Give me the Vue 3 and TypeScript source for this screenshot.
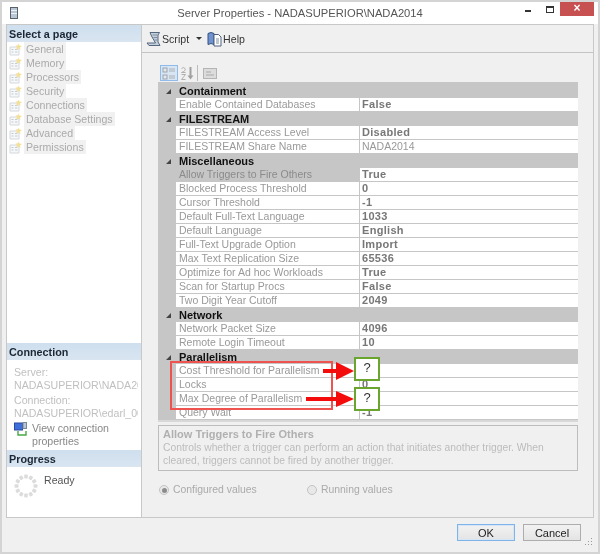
<script setup lang="ts">
type Row = { name: string; value?: string; cat?: boolean; plain?: boolean; sel?: boolean };
const pages: string[] = ['General', 'Memory', 'Processors', 'Security', 'Connections', 'Database Settings', 'Advanced', 'Permissions'];
const rows: Row[] = [
  { name: 'Containment', cat: true },
  { name: 'Enable Contained Databases', value: 'False' },
  { name: 'FILESTREAM', cat: true },
  { name: 'FILESTREAM Access Level', value: 'Disabled' },
  { name: 'FILESTREAM Share Name', value: 'NADA2014', plain: true },
  { name: 'Miscellaneous', cat: true },
  { name: 'Allow Triggers to Fire Others', value: 'True', sel: true },
  { name: 'Blocked Process Threshold', value: '0' },
  { name: 'Cursor Threshold', value: '-1' },
  { name: 'Default Full-Text Language', value: '1033' },
  { name: 'Default Language', value: 'English' },
  { name: 'Full-Text Upgrade Option', value: 'Import' },
  { name: 'Max Text Replication Size', value: '65536' },
  { name: 'Optimize for Ad hoc Workloads', value: 'True' },
  { name: 'Scan for Startup Procs', value: 'False' },
  { name: 'Two Digit Year Cutoff', value: '2049' },
  { name: 'Network', cat: true },
  { name: 'Network Packet Size', value: '4096' },
  { name: 'Remote Login Timeout', value: '10' },
  { name: 'Parallelism', cat: true },
  { name: 'Cost Threshold for Parallelism', value: '' },
  { name: 'Locks', value: '0' },
  { name: 'Max Degree of Parallelism', value: '' },
  { name: 'Query Wait', value: '-1' },
];
const dots = Array.from({ length: 12 }, (_, i) => i * 30);
</script>

<template>
  <div class="window">
    <header class="titlebar">
      <svg class="app-icon" width="8" height="12" viewBox="0 0 8 12">
        <rect x="0.500" y="0.500" width="7" height="11" fill="#b9c6d4" stroke="#56626e" />
        <path d="M1 3.500h6M1 6.500h6" stroke="#eef2f6" />
      </svg>
      <span class="title">Server Properties - NADASUPERIOR\NADA2014</span>
      <div class="controls">
        <span class="min"></span>
        <span class="max"></span>
        <span class="close">×</span>
      </div>
    </header>

    <div class="body">
      <aside class="left">
        <div class="pane-head">Select a page</div>
        <ul class="pages">
          <li v-for="p in pages" :key="p">
            <svg width="14" height="13" viewBox="0 0 14 13">
              <path d="M1 4h9v8H1z" fill="#f6f8fa" stroke="#d4d8dc" />
              <path d="M2.500 6.500h2M6 6.500h2.500M2.500 9h2M6 9h2.500" stroke="#c4cad0" />
              <path d="M9.500 0.500l1 2 2.500 .5-2 1.500 .5 2.500-2-1.500-2.500 1 1-2.500-1.500-1.500 2.500-.2z" fill="#f3df98" />
            </svg>
            <span>{{ p }}</span>
          </li>
        </ul>
        <div class="pane-head">Connection</div>
        <div class="conn">
          <div>Server:</div>
          <div>NADASUPERIOR\NADA2014</div>
          <div class="gap">Connection:</div>
          <div>NADASUPERIOR\edarl_00</div>
        </div>
        <div class="view">
          <svg width="13" height="14" viewBox="0 0 13 14">
            <rect x="0.500" y="1" width="8" height="7" fill="#3f6fd8" stroke="#2a4a9c" />
            <rect x="9" y="0.500" width="3.500" height="6" fill="#b9c4d6" stroke="#7b8798" />
            <path d="M4 9v4h8V9" fill="none" stroke="#48a846" stroke-width="1.400" />
          </svg>
          <span>View connection<br />properties</span>
        </div>
        <div class="pane-head">Progress</div>
        <div class="progress">
          <svg width="24" height="24" viewBox="0 0 24 24">
            <rect v-for="d in dots" :key="d" x="10.200" y="0.500" width="3.600" height="4" rx="1" fill="#dcdcdc" :transform="`rotate(${d} 12 12)`" />
          </svg>
          <span>Ready</span>
        </div>
      </aside>

      <main class="right">
        <div class="toolbar">
          <div class="tool">
            <svg width="16" height="16" viewBox="0 0 16 16">
              <path d="M4 1.500h9.500l-1.500 2.500v7l2 3.500H3L1 12h8.500L5.500 5z" fill="#c3cfdc" stroke="#55677c" />
              <path d="M6.500 4h5M7.500 6.500h4M8.500 9h3" stroke="#7e8ea0" />
            </svg>
            <span>Script</span>
            <i class="caret"></i>
          </div>
          <div class="tool help">
            <svg width="15" height="16" viewBox="0 0 15 16">
              <path d="M1 2.500q3-2 6 0v11q-3-2-6 0z" fill="#6f93d0" stroke="#34527f" />
              <path d="M7 3.500h4.500l2.500 2.500v9H7z" fill="#fff" stroke="#4c6080" />
              <path d="M9 8h3M9 10h3M9 12h3" stroke="#7e8ea0" />
            </svg>
            <span>Help</span>
          </div>
        </div>

        <div class="content">
          <div class="grid-tools">
            <span class="gt active">
              <svg width="16" height="15" viewBox="0 0 16 15">
                <rect x="2" y="2" width="4" height="4" fill="#e4e8ec" stroke="#9aa3ac" />
                <rect x="2" y="9" width="4" height="4" fill="#e4e8ec" stroke="#9aa3ac" />
                <path d="M8 3h6M8 5h6M8 10h6M8 12h6" stroke="#a8b0b8" />
              </svg>
            </span>
            <span class="gt sort">
              <svg width="14" height="15" viewBox="0 0 14 15">
                <path d="M1.500 2.500q2-2 3.500 0t-3.500 4h4M1.500 8.500h4l-4 5h4" fill="none" stroke="#b0b0b0" />
                <path d="M10.500 1v9" stroke="#a0a0a0" stroke-width="2" />
                <path d="M7.500 9.500h6l-3 4z" fill="#a0a0a0" />
              </svg>
            </span>
            <i class="sep"></i>
            <span class="gt doc">
              <svg width="14" height="13" viewBox="0 0 14 13">
                <rect x="0.500" y="1.500" width="13" height="10" fill="#dcdcdc" stroke="#b4b4b4" />
                <path d="M3 5h5M3 8h8" stroke="#aaa" />
              </svg>
            </span>
          </div>

          <div class="grid">
            <template v-for="r in rows" :key="r.name">
              <div v-if="r.cat" class="row cat">
                <i class="tri"></i>
                <span>{{ r.name }}</span>
              </div>
              <div v-else class="row">
                <span class="name" :class="{ sel: r.sel }">{{ r.name }}</span>
                <span class="val" :class="{ plain: r.plain }">{{ r.value }}</span>
              </div>
            </template>

            <div class="mark-rect"></div>
            <div class="mark-q q1">?</div>
            <div class="mark-q q2">?</div>
            <svg class="arrow a1" width="32" height="20" viewBox="0 0 32 20">
              <path d="M0 8h13V1l18 9-18 9v-7H0z" fill="#f40c0c" />
            </svg>
            <svg class="arrow a2" width="49" height="20" viewBox="0 0 49 20">
              <path d="M0 8h30V2l18 8-18 8v-6H0z" fill="#f40c0c" />
            </svg>
          </div>

          <section class="desc">
            <div class="desc-title">Allow Triggers to Fire Others</div>
            <div>Controls whether a trigger can perform an action that initiates another trigger. When<br />cleared, triggers cannot be fired by another trigger.</div>
          </section>

          <div class="radios">
            <label class="radio r1"><i class="dot on"></i>Configured values</label>
            <label class="radio"><i class="dot"></i>Running values</label>
          </div>
        </div>
      </main>
    </div>

    <footer class="footer">
      <button class="btn default">OK</button>
      <button class="btn">Cancel</button>
      <svg class="grip" width="8" height="8" viewBox="0 0 8 8">
        <path d="M6 0h1v1H6zM3 3h1v1H3zM6 3h1v1H6zM0 6h1v1H0zM3 6h1v1H3zM6 6h1v1H6z" fill="#9a9a9a" />
      </svg>
    </footer>
  </div>
</template>

<style>
html, body { margin: 0; background: #fff; }
</style>

<style scoped>
.window {
  width: 600px;
  height: 554px;
  box-sizing: border-box;
  border: 2px solid #d4d4d4;
  background: #f0f0f0;
  display: flex;
  flex-direction: column;
  font-family: "Liberation Sans", Arial, sans-serif;
  font-size: 10.6px;
  color: #222;
  filter: blur(0.35px);
  overflow: hidden;
}
.titlebar {
  height: 22px;
  background: #fff;
  display: flex;
  align-items: center;
  position: relative;
  flex: none;
}
.app-icon { margin-left: 8px; }
.title {
  position: absolute;
  left: 0;
  right: 0;
  text-align: center;
  font-size: 11.2px;
  color: #555;
  top: 5px;
}
.controls {
  position: absolute;
  top: -1px;
  right: 4px;
  display: flex;
  align-items: flex-start;
}
.min {
  width: 6px;
  height: 2px;
  background: #333;
  margin-top: 9px;
  margin-right: 15px;
}
.max {
  width: 6px;
  height: 4px;
  border: 1px solid #333;
  border-top-width: 2px;
  margin-top: 5px;
  margin-right: 6px;
}
.close {
  width: 34px;
  height: 15px;
  background: #c75050;
  color: #fff;
  text-align: center;
  font-size: 12px;
  line-height: 14px;
  font-weight: 700;
}
.body {
  flex: 1;
  display: flex;
  margin: 0 4px;
  min-height: 0;
  border: 1px solid #c8c8c8;
}
.left {
  width: 135px;
  flex: none;
  background: #fff;
  border-right: 1px solid #c8c8c8;
  display: flex;
  flex-direction: column;
  box-sizing: border-box;
}
.pane-head {
  height: 17px;
  line-height: 18px;
  padding-left: 2px;
  font-weight: 700;
  font-size: 10.8px;
  color: #1c2733;
  background: linear-gradient(#cfdfee, #d9e5f1);
  flex: none;
}
.pages {
  list-style: none;
  margin: 0;
  padding: 0;
  flex: 1;
}
.pages li {
  height: 14px;
  display: flex;
  align-items: center;
  padding-left: 2px;
  gap: 1px;
  color: #aaa;
}
.pages li span {
  background: #f1f1f1;
  line-height: 14px;
  padding: 0 2px;
}
.conn {
  padding: 6px 0 0 7px;
  color: #c0c0c0;
  line-height: 13px;
  white-space: nowrap;
  overflow: hidden;
  margin-right: 3px;
}
.conn .gap { margin-top: 2px; }
.view {
  display: flex;
  gap: 5px;
  padding: 2px 0 2px 7px;
  color: #888;
  line-height: 13px;
  flex: none;
}
.progress {
  height: 50px;
  display: flex;
  padding: 7px 0 0 7px;
  box-sizing: border-box;
  gap: 6px;
  color: #555;
  flex: none;
}
.progress span { line-height: 14px; margin-top: -1px; }
.right {
  flex: 1;
  display: flex;
  flex-direction: column;
  min-width: 0;
}
.toolbar {
  height: 28px;
  box-sizing: border-box;
  flex: none;
  border-bottom: 1px solid #c4c4c4;
  display: flex;
  align-items: center;
  padding-left: 4px;
  gap: 5px;
  background: #f0f0f0;
  color: #333;
}
.tool {
  display: flex;
  align-items: center;
  gap: 0;
}
.tool.help { gap: 1px; }
.caret {
  width: 0;
  height: 0;
  border: 3px solid transparent;
  border-top: 3px solid #333;
  border-bottom: 0;
  margin-left: 7px;
}
.content {
  flex: 1;
  padding: 11px 0 0 16px;
  min-height: 0;
  background: #f0f0f0;
  width: 420px;
}
.grid-tools {
  height: 18px;
  display: flex;
  align-items: center;
  margin-left: 2px;
}
.gt {
  height: 16px;
  display: flex;
  align-items: center;
  justify-content: center;
  box-sizing: border-box;
}
.gt.active {
  width: 18px;
  background: #d8e6f4;
  border: 1px solid #8ebbea;
}
.gt.sort { width: 14px; margin-left: 2px; }
.sep {
  width: 1px;
  height: 16px;
  background: #bbb;
  margin: 0 5px 0 3px;
}
.gt.doc { width: 14px; }
.grid {
  position: relative;
  background: #c6c6c6;
  width: 420px;
  height: 340px;
  padding-top: 2px;
  border-bottom: 2px solid #d8d8d8;
  box-sizing: border-box;
}
.row {
  height: 14px;
  display: flex;
  line-height: 14px;
  padding-left: 18px;
  box-sizing: border-box;
  font-size: 10.5px;
}
.row.cat {
  padding-left: 10px;
  font-weight: 700;
  font-size: 11px;
  color: #111;
  align-items: center;
  gap: 8px;
}
.tri {
  width: 0;
  height: 0;
  border-style: solid;
  border-width: 0 0 5px 5px;
  border-color: transparent transparent #444 transparent;
  margin-left: -2px;
}
.name {
  width: 183px;
  flex: none;
  background: #fff;
  color: #999;
  padding-left: 3px;
  box-sizing: border-box;
  margin-bottom: 1px;
  white-space: nowrap;
  line-height: 13px;
}
.name.sel {
  background: #c6c6c6;
  color: #8b8b8b;
}
.val {
  flex: 1;
  background: #fff;
  color: #777;
  font-weight: 700;
  font-size: 11px;
  letter-spacing: 0.3px;
  margin-left: 1px;
  padding-left: 2px;
  margin-bottom: 1px;
  line-height: 13px;
}
.val.plain {
  font-weight: 400;
  font-size: 10.5px;
  letter-spacing: 0;
  color: #999;
}
.mark-rect {
  position: absolute;
  left: 12px;
  top: 279px;
  width: 163px;
  height: 49px;
  border: 2px solid #ef5350;
  box-sizing: border-box;
}
.mark-q {
  position: absolute;
  left: 196px;
  width: 26px;
  height: 24px;
  background: #fff;
  border: 2px solid #6aa52f;
  box-sizing: border-box;
  text-align: center;
  font-size: 13px;
  line-height: 17px;
  color: #333;
}
.q1 { top: 275px; }
.q2 { top: 305px; }
.arrow { position: absolute; }
.a1 { left: 165px; top: 279px; }
.a2 { left: 148px; top: 307px; }
.desc {
  width: 420px;
  height: 46px;
  margin-top: 3px;
  box-sizing: border-box;
  border: 1px solid #bdbdbd;
  padding: 2px 4px;
  color: #bcbcbc;
  font-size: 10.3px;
  line-height: 13px;
  background: #f0f0f0;
  white-space: nowrap;
}
.desc-title {
  font-weight: 700;
  font-size: 11px;
  color: #b0b0b0;
}
.radios {
  display: flex;
  margin-top: 12px;
  margin-left: 1px;
  color: #aaa;
  font-size: 10.4px;
}
.radio {
  display: flex;
  align-items: center;
  gap: 4px;
  line-height: 14px;
}
.r1 { width: 148px; }
.dot {
  width: 10px;
  height: 10px;
  box-sizing: border-box;
  border-radius: 50%;
  border: 1px solid #c4c4c4;
  background: #e8e8e8;
  position: relative;
  display: block;
  flex: none;
}
.dot.on::after {
  content: "";
  position: absolute;
  left: 1.500px;
  top: 1.500px;
  width: 5px;
  height: 5px;
  border-radius: 50%;
  background: #8c8c8c;
}
.footer {
  height: 34px;
  box-sizing: border-box;
  flex: none;
  margin: 0 4px;
  display: flex;
  justify-content: flex-end;
  align-items: flex-start;
  padding: 6px 13px 0 0;
  gap: 8px;
  position: relative;
}
.btn {
  width: 58px;
  height: 17px;
  padding: 0;
  font: 11px "Liberation Sans", Arial, sans-serif;
  color: #222;
  background: linear-gradient(#f2f2f2, #e4e4e4);
  border: 1px solid #adadad;
  line-height: 14px;
}
.btn.default {
  border-color: #7eb4ea;
  box-shadow: inset 0 0 0 1px #d6e6f6;
}
.grip {
  position: absolute;
  right: 1px;
  bottom: 6px;
}
</style>
